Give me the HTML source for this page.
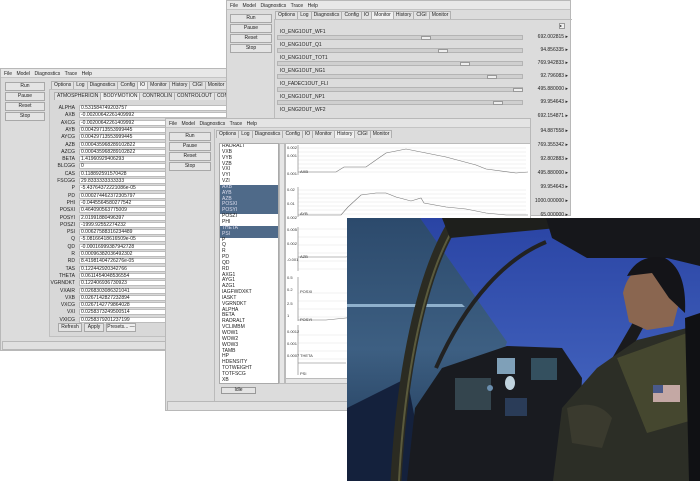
<!DOCTYPE html>
<html><head><meta charset="utf-8">
<style>
*{margin:0;padding:0;box-sizing:border-box}
body{width:700px;height:481px;background:#fff;position:relative;overflow:hidden;font-family:"Liberation Sans",sans-serif;font-size:5px;color:#222}
.a{position:absolute}
.win{position:absolute;background:#dcdcdc;border:1px solid #b8b8b8}
.menu{position:absolute;left:0;right:0;top:0;height:9px;background:#e8e8e8;border-bottom:1px solid #c4c4c4;padding:2px 3px;white-space:nowrap;word-spacing:3px}
.btn{position:absolute;height:9px;background:#e4e4e4;border:1px solid #a8a8a8;text-align:center;line-height:7px}
.tabs{position:absolute;height:8px;white-space:nowrap}
.tabs span{display:inline-block;border:1px solid #b0b0b0;border-bottom:none;background:#e2e2e2;padding:0 2px;height:8px;line-height:7px;margin-right:-1px}
.row{position:absolute;height:7px;line-height:7px;white-space:nowrap}
.lab{position:absolute;text-align:right;width:74px;left:0}
.fld{position:absolute;left:78px;width:150px;height:6px;background:#fff;border:1px solid #bcbcbc;padding-left:1px;line-height:5px}
.sl{position:absolute;width:246px;height:5px;background:#cfcfcf;border:1px solid #b4b4b4}
.th{position:absolute;top:0;width:10px;height:4px;background:#eee;border:1px solid #999}
.val{position:absolute;left:522px;width:46px;text-align:right}
.li{height:5.85px;line-height:5.85px;padding-left:2px}
.sel{background:#4f6a89;color:#dde}
</style></head><body>

<!-- Window 1 -->
<div class="win" style="left:0;top:68px;width:232px;height:283px">
  <div class="menu">File Model Diagnostics Trace Help</div>
  <div class="btn" style="left:4px;top:13px;width:40px">Run</div>
  <div class="btn" style="left:4px;top:23px;width:40px">Pause</div>
  <div class="btn" style="left:4px;top:33px;width:40px">Reset</div>
  <div class="btn" style="left:4px;top:43px;width:40px">Stop</div>
  <div class="tabs" style="left:50px;top:12px"><span>Options</span><span>Log</span><span>Diagnostics</span><span>Config</span><span style="background:#f0f0f0">IO</span><span>Monitor</span><span>History</span><span>CIGI</span><span>Monitor</span></div>
  <div class="a" style="left:48px;top:20px;width:184px;height:248px;border:1px solid #c0c0c0;background:#d8d8d8"></div>
  <div class="tabs" style="left:53px;top:23px"><span>ATMOSPHERICIN</span><span style="background:#f0f0f0">BODYMOTION</span><span>CONTROLIN</span><span>CONTROLOUT</span><span>CONTROLTRIM</span></div>
  <div class="a" style="left:0;top:36px;width:232px">
   <div class="row" style="top:0"><span class="lab">ALPHA</span><span class="fld">0.531584749203757</span></div>
   <div class="row" style="top:7.3px"><span class="lab">AXB</span><span class="fld">-0.00200642261409992</span></div>
   <div class="row" style="top:14.6px"><span class="lab">AXCG</span><span class="fld">-0.00200642261409992</span></div>
   <div class="row" style="top:21.9px"><span class="lab">AYB</span><span class="fld">0.00429713553999445</span></div>
   <div class="row" style="top:29.2px"><span class="lab">AYCG</span><span class="fld">0.00429713553999445</span></div>
   <div class="row" style="top:36.5px"><span class="lab">AZB</span><span class="fld">0.000435968289102822</span></div>
   <div class="row" style="top:43.8px"><span class="lab">AZCG</span><span class="fld">0.000435968289102822</span></div>
   <div class="row" style="top:51.1px"><span class="lab">BETA</span><span class="fld">1.41960929406293</span></div>
   <div class="row" style="top:58.4px"><span class="lab">BLCGG</span><span class="fld">0</span></div>
   <div class="row" style="top:65.7px"><span class="lab">CAS</span><span class="fld">0.118892591570428</span></div>
   <div class="row" style="top:73px"><span class="lab">FSCGG</span><span class="fld">29.8333333333333</span></div>
   <div class="row" style="top:80.3px"><span class="lab">P</span><span class="fld">-5.43764372221086e-05</span></div>
   <div class="row" style="top:87.6px"><span class="lab">PD</span><span class="fld">0.000274462372305797</span></div>
   <div class="row" style="top:94.9px"><span class="lab">PHI</span><span class="fld">-0.0445564580277542</span></div>
   <div class="row" style="top:102.2px"><span class="lab">POSXI</span><span class="fld">0.464090563775009</span></div>
   <div class="row" style="top:109.5px"><span class="lab">POSYI</span><span class="fld">2.01991880496397</span></div>
   <div class="row" style="top:116.8px"><span class="lab">POSZI</span><span class="fld">-1999.92552274232</span></div>
   <div class="row" style="top:124.1px"><span class="lab">PSI</span><span class="fld">0.00627588316234489</span></div>
   <div class="row" style="top:131.4px"><span class="lab">Q</span><span class="fld">-5.08166418616509e-05</span></div>
   <div class="row" style="top:138.7px"><span class="lab">QD</span><span class="fld">-0.00016999387942728</span></div>
   <div class="row" style="top:146px"><span class="lab">R</span><span class="fld">0.00096382036492302</span></div>
   <div class="row" style="top:153.3px"><span class="lab">RD</span><span class="fld">8.41981404726276e-05</span></div>
   <div class="row" style="top:160.6px"><span class="lab">TAS</span><span class="fld">0.122442920342766</span></div>
   <div class="row" style="top:167.9px"><span class="lab">THETA</span><span class="fld">0.0611454048536554</span></div>
   <div class="row" style="top:175.2px"><span class="lab">VGRNDKT</span><span class="fld">0.122406936730923</span></div>
   <div class="row" style="top:182.5px"><span class="lab">VXAIR</span><span class="fld">0.0268303086321041</span></div>
   <div class="row" style="top:189.8px"><span class="lab">VXB</span><span class="fld">0.0267142827232894</span></div>
   <div class="row" style="top:197.1px"><span class="lab">VXCG</span><span class="fld">0.0267142779864028</span></div>
   <div class="row" style="top:204.4px"><span class="lab">VXI</span><span class="fld">0.0258373249500514</span></div>
   <div class="row" style="top:211.7px"><span class="lab">VXICG</span><span class="fld">0.0258379201237199</span></div>
  </div>
  <div class="btn" style="left:57px;top:254px;width:24px">Refresh</div>
  <div class="btn" style="left:83px;top:254px;width:20px">Apply</div>
  <div class="btn" style="left:105px;top:254px;width:30px;background:#eee">Presets... —</div>
  <div class="a" style="left:1px;top:272px;width:230px;height:9px;border:1px solid #b8b8b8;background:#e0e0e0"></div>
</div>

<!-- Window 2 -->
<div class="win" style="left:226px;top:0;width:345px;height:216px">
  <div class="menu">File Model Diagnostics Trace Help</div>
  <div class="btn" style="left:3px;top:13px;width:42px">Run</div>
  <div class="btn" style="left:3px;top:23px;width:42px">Pause</div>
  <div class="btn" style="left:3px;top:33px;width:42px">Reset</div>
  <div class="btn" style="left:3px;top:43px;width:42px">Stop</div>
  <div class="tabs" style="left:48px;top:10px"><span>Options</span><span>Log</span><span>Diagnostics</span><span>Config</span><span>IO</span><span style="background:#f0f0f0">Monitor</span><span>History</span><span>CIGI</span><span>Monitor</span></div>
  <div class="a" style="left:47px;top:18px;width:298px;height:198px;border-left:1px solid #bbb;border-top:1px solid #bbb"></div>
  <div class="a" style="left:332px;top:22px;width:6px;height:6px;border:1px solid #999;background:#eee;font-size:4px;line-height:4px">▸</div>
  <div class="a" style="left:-227px;top:-1px">
   <div class="row" style="left:280px;top:29px">IO_ENG1OUT_WF1</div><div class="sl" style="left:277px;top:35px"><div class="th" style="left:143px"></div></div><div class="val" style="top:34px">692.002815 ▸</div>
   <div class="row" style="left:280px;top:42px">IO_ENG1OUT_Q1</div><div class="sl" style="left:277px;top:48px"><div class="th" style="left:160px"></div></div><div class="val" style="top:47px">94.856335 ▸</div>
   <div class="row" style="left:280px;top:55px">IO_ENG1OUT_TOT1</div><div class="sl" style="left:277px;top:61px"><div class="th" style="left:182px"></div></div><div class="val" style="top:60px">769.942833 ▸</div>
   <div class="row" style="left:280px;top:68px">IO_ENG1OUT_NG1</div><div class="sl" style="left:277px;top:74px"><div class="th" style="left:209px"></div></div><div class="val" style="top:73px">92.796083 ▸</div>
   <div class="row" style="left:280px;top:81px">IO_FADEC1OUT_FLI</div><div class="sl" style="left:277px;top:87px"><div class="th" style="left:235px"></div></div><div class="val" style="top:86px">495.880000 ▸</div>
   <div class="row" style="left:280px;top:94px">IO_ENG1OUT_NP1</div><div class="sl" style="left:277px;top:100px"><div class="th" style="left:215px"></div></div><div class="val" style="top:99px">99.954643 ▸</div>
   <div class="row" style="left:280px;top:107px">IO_ENG2OUT_WF2</div><div class="val" style="top:113px">692.154871 ▸</div>
   <div class="val" style="top:128px">94.887558 ▸</div>
   <div class="val" style="top:142px">769.355342 ▸</div>
   <div class="val" style="top:156px">92.802883 ▸</div>
   <div class="val" style="top:170px">495.880000 ▸</div>
   <div class="val" style="top:184px">99.954643 ▸</div>
   <div class="val" style="top:198px">1000.000000 ▸</div>
   <div class="val" style="top:212px">65.000000 ▸</div>
  </div>
</div>

<!-- Window 3 -->
<div class="win" style="left:165px;top:118px;width:366px;height:293px">
  <div class="menu" style="background:#e4e4e4">File Model Diagnostics Trace Help</div>
  <div class="btn" style="left:3px;top:13px;width:42px">Run</div>
  <div class="btn" style="left:3px;top:23px;width:42px">Pause</div>
  <div class="btn" style="left:3px;top:33px;width:42px">Reset</div>
  <div class="btn" style="left:3px;top:43px;width:42px">Stop</div>
  <div class="a" style="left:48px;top:10px;width:1px;height:272px;background:#bbb"></div>
  <div class="tabs" style="left:50px;top:11px"><span>Options</span><span>Log</span><span>Diagnostics</span><span>Config</span><span>IO</span><span>Monitor</span><span style="background:#f0f0f0">History</span><span>CIGI</span><span>Monitor</span></div>
  <div class="a" style="left:53px;top:24px;width:60px;height:241px;background:#fff;border:1px solid #aaa;overflow:hidden">
   <div class="li">RADRALT</div><div class="li">VXB</div><div class="li">VYB</div><div class="li">VZB</div><div class="li">VXI</div><div class="li">VYI</div><div class="li">VZI</div>
   <div class="li sel">AXB</div><div class="li sel">AYB</div><div class="li sel">AZB</div><div class="li sel">POSXI</div><div class="li sel">POSYI</div>
   <div class="li">POSZI</div><div class="li">PHI</div><div class="li sel">THETA</div><div class="li sel">PSI</div>
   <div class="li">P</div><div class="li">Q</div><div class="li">R</div><div class="li">PD</div><div class="li">QD</div><div class="li">RD</div><div class="li">AXG1</div><div class="li">AYG1</div><div class="li">AZG1</div><div class="li">IAGFWDXKT</div><div class="li">IASKT</div><div class="li">VGRNDKT</div><div class="li">ALPHA</div><div class="li">BETA</div><div class="li">RADRALT</div><div class="li">VCLIMBM</div><div class="li">WOW1</div><div class="li">WOW2</div><div class="li">WOW3</div><div class="li">TAMB</div><div class="li">HP</div><div class="li">HDENSITY</div><div class="li">TOTWEIGHT</div><div class="li">TOTFSCG</div><div class="li">XB</div><div class="li">YA</div>
  </div>
  <div class="a" style="left:113px;top:24px;width:6px;height:241px;background:#e6e6e6;border:1px solid #bbb"></div>
  <div class="a" style="left:119px;top:24px;width:246px;height:241px;background:#fff;border:1px solid #bbb"></div>
  <div class="a" style="left:119px;top:259px;width:246px;height:6px;background:#e6e6e6;border:1px solid #bbb"></div>
  <svg class="a" style="left:120px;top:26px" width="245" height="232" viewBox="0 0 245 232">
   <g fill="none" stroke="#e4e4e4" stroke-width="0.6">
    <path d="M12 3H240M12 7H240M12 11H240M12 15H240M12 19H240M12 23H240M12 27H240"/>
    <path d="M12 45H240M12 49H240M12 53H240M12 57H240M12 61H240M12 65H240M12 69H240"/>
    <path d="M12 84H240M12 92H240M12 100H240M12 108H240M12 116H240M12 124H240M12 148H240M12 156H240M12 164H240M12 172H240M12 190H240M12 198H240M12 206H240M12 214H240"/>
   </g>
   <g fill="none" stroke="#777" stroke-width="0.6">
    <path d="M12 0V30M12 42V72M12 82V126M12 132V176M12 180V230"/>
    <path d="M12 27H50L58 22H80L100 8L120 4L140 8L160 12L190 20L200 24L230 28L242 27"/>
    <path d="M12 70H55L62 62L75 50L90 48H100L110 52L125 56L135 53L138 58L160 62L180 64L200 68L220 70L242 70"/>
    <path d="M12 112H60L70 110H100L120 112"/>
    <path d="M12 175H40L70 172"/>
    <path d="M12 218H60"/>
   </g>
   <g font-size="4" fill="#333" font-family="Liberation Sans">
    <text x="14" y="28">AXB</text><text x="14" y="70">AYB</text><text x="14" y="113">AZB</text><text x="14" y="148">POSXI</text><text x="14" y="176">POSYI</text><text x="14" y="212">THETA</text><text x="14" y="230">PSI</text>
    <text x="1" y="4">0.002</text><text x="1" y="12">0.001</text><text x="1" y="30">0.001</text><text x="1" y="46">0.02</text><text x="1" y="60">0.01</text><text x="1" y="74">0.002</text><text x="1" y="86">0.005</text><text x="1" y="100">0.002</text><text x="1" y="116">-0.001</text><text x="1" y="134">0.5</text><text x="1" y="146">0.2</text><text x="1" y="160">2.5</text><text x="1" y="172">1</text><text x="1" y="188">0.0012</text><text x="1" y="200">0.001</text><text x="1" y="212">0.0007</text>
   </g>
  </svg>
  <div class="a" style="left:55px;top:268px;width:35px;height:7px;border:1px solid #999;background:#e4e4e4;text-align:center;line-height:5px">Idle</div>
  <div class="a" style="left:1px;top:282px;width:364px;height:10px;border:1px solid #b8b8b8;background:#e0e0e0"></div>
</div>

<!-- Photo -->
<div class="a" style="left:347px;top:218px;width:353px;height:263px;overflow:hidden;background:#2a48a0">
 <svg width="353" height="263" viewBox="0 0 353 263">
  <defs>
   <linearGradient id="sky" x1="0" y1="0" x2="0" y2="1"><stop offset="0" stop-color="#2a44a4"/><stop offset="1" stop-color="#4d70c8"/></linearGradient>
   <linearGradient id="sea" x1="0" y1="0" x2="0" y2="1"><stop offset="0" stop-color="#2c4a6c"/><stop offset=".5" stop-color="#3d5f82"/><stop offset="1" stop-color="#1c3452"/></linearGradient>
  </defs>
  <rect width="353" height="263" fill="url(#sky)"/>
  <path d="M0 0H73L160 124L110 263H0Z" fill="url(#sea)"/>
  <path d="M0 86H115L118 89H0Z" fill="#8fb0cc"/>
  <path d="M0 190L60 160L80 263H0Z" fill="#14213c"/>
  <!-- canopy frame -->
  <path d="M49 263C55 150 75 60 103 11" stroke="#2b2b22" stroke-width="11" fill="none"/>
  <path d="M49 263C55 150 75 60 103 11" stroke="#5a5a3c" stroke-width="2" fill="none" transform="translate(3,0)"/>
  <path d="M89 150C120 80 160 40 199 24" stroke="#222" stroke-width="4" fill="none"/>
  <path d="M95 0H353V10H210L103 20Z" fill="#1e1f1c"/>
  <path d="M199 0H353V48L320 40L240 40L205 20Z" fill="#16171b"/>
  <!-- dashboard -->
  <path d="M60 263L68 190L95 150L160 128L215 130L235 160L230 263Z" fill="#191b20"/>
  <rect x="108" y="160" width="36" height="32" fill="#34454e"/>
  <rect x="150" y="140" width="18" height="16" fill="#7fa0b8"/>
  <rect x="184" y="140" width="26" height="22" fill="#34505f"/>
  <ellipse cx="163" cy="165" rx="5" ry="7" fill="#c0d3de"/>
  <circle cx="143" cy="170" r="3" fill="#6a8eae"/>
  <rect x="158" y="180" width="22" height="18" fill="#2a3c58"/>
  <!-- pillar right -->
  <path d="M245 175L300 80L310 84L258 180Z" fill="#1a1a1c"/>
  <!-- pilot -->
  <path d="M206 263L215 190L250 150L290 122L340 110L353 108V263Z" fill="#2c2e26"/>
  <path d="M270 140L340 115L353 200L300 215Z" fill="#45472f"/>
  <path d="M276 75Q282 48 306 48Q330 52 332 85L326 108L300 112L282 104Z" fill="#8a6650"/>
  <path d="M280 58Q292 35 318 40Q340 52 338 95L322 80L305 55Z" fill="#141418"/>
  <rect x="306" y="167" width="27" height="17" fill="#c4a8a4"/>
  <rect x="306" y="167" width="10" height="8" fill="#4a5a8a"/>
  <path d="M338 100L353 95V263H342Z" fill="#101114"/>
  <path d="M220 190Q250 180 265 200L255 230L225 225Z" fill="#3a3a2e"/>
 </svg>
</div>
</body></html>
